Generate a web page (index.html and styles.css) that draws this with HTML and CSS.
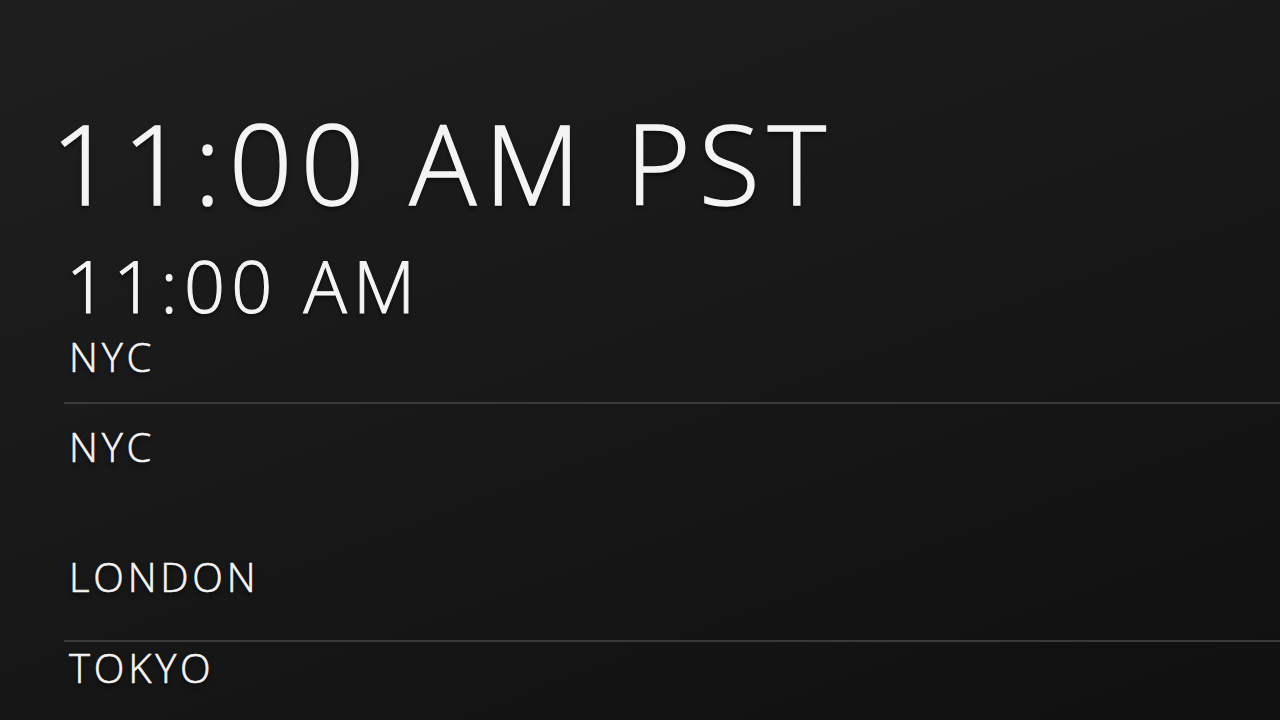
FILE: index.html
```html
<!DOCTYPE html>
<html lang="en">
<head>
    <meta charset="UTF-8">
    <meta name="viewport" content="width=device-width, initial-scale=1.0">
    <title>World Clock</title>
    <link rel="stylesheet" href="styles.css">
</head>
<body>
    <div class="clock">
        <h1 class="main-time">11:00 AM PST</h1>
        <div class="zones">
            <div class="zone first">
                <div class="zone-time">11:00 AM</div>
                <div class="zone-city">NYC</div>
            </div>
            <div class="zone second">
                <div class="zone-city">NYC</div>
                <div class="zone-city spaced">LONDON</div>
            </div>
            <div class="zone last">
                <div class="zone-city">TOKYO</div>
            </div>
        </div>
    </div>
</body>
</html>
```

FILE: styles.css
```css
html, body {
    height: 100%;
}
body {
    margin: 0;
    font-family: "Open Sans", "Noto Sans", sans-serif;
    font-weight: 300;
    color: #f4f4f4;
    background: linear-gradient(160deg, #1f1f1f 0%, #171717 55%, #101010 100%);
    overflow: hidden;
    text-shadow: 0 3px 4px rgba(0, 0, 0, 0.6);
}
.clock {
    padding-top: 107px;
}
.main-time {
    margin: 0 0 0 51px;
    font-size: 111px;
    font-weight: 300;
    line-height: 1;
    letter-spacing: 8.3px;
    -webkit-text-stroke: 1.6px #f4f4f4;
}
.zones {
    margin-left: 64px;
    margin-top: 31px;
}
.zone {
    border-bottom: 2px solid #3a3a3a;
}
.zone.first {
    padding-bottom: 25px;
}
.zone.second {
    padding-top: 23px;
    padding-bottom: 43px;
}
.zone.last {
    border-bottom: none;
    padding-top: 6px;
}
.zone-time {
    font-size: 72px;
    line-height: 1;
    margin-left: 2px;
    letter-spacing: 6.2px;
    -webkit-text-stroke: 1.1px #f4f4f4;
}
.zone-city {
    font-size: 40px;
    line-height: 1;
    margin-left: 5px;
    letter-spacing: 3.8px;
    -webkit-text-stroke: 0.6px #f4f4f4;
}
.zone.first .zone-city {
    margin-top: 16px;
}
.zone-city.spaced {
    margin-top: 90px;
}
```
